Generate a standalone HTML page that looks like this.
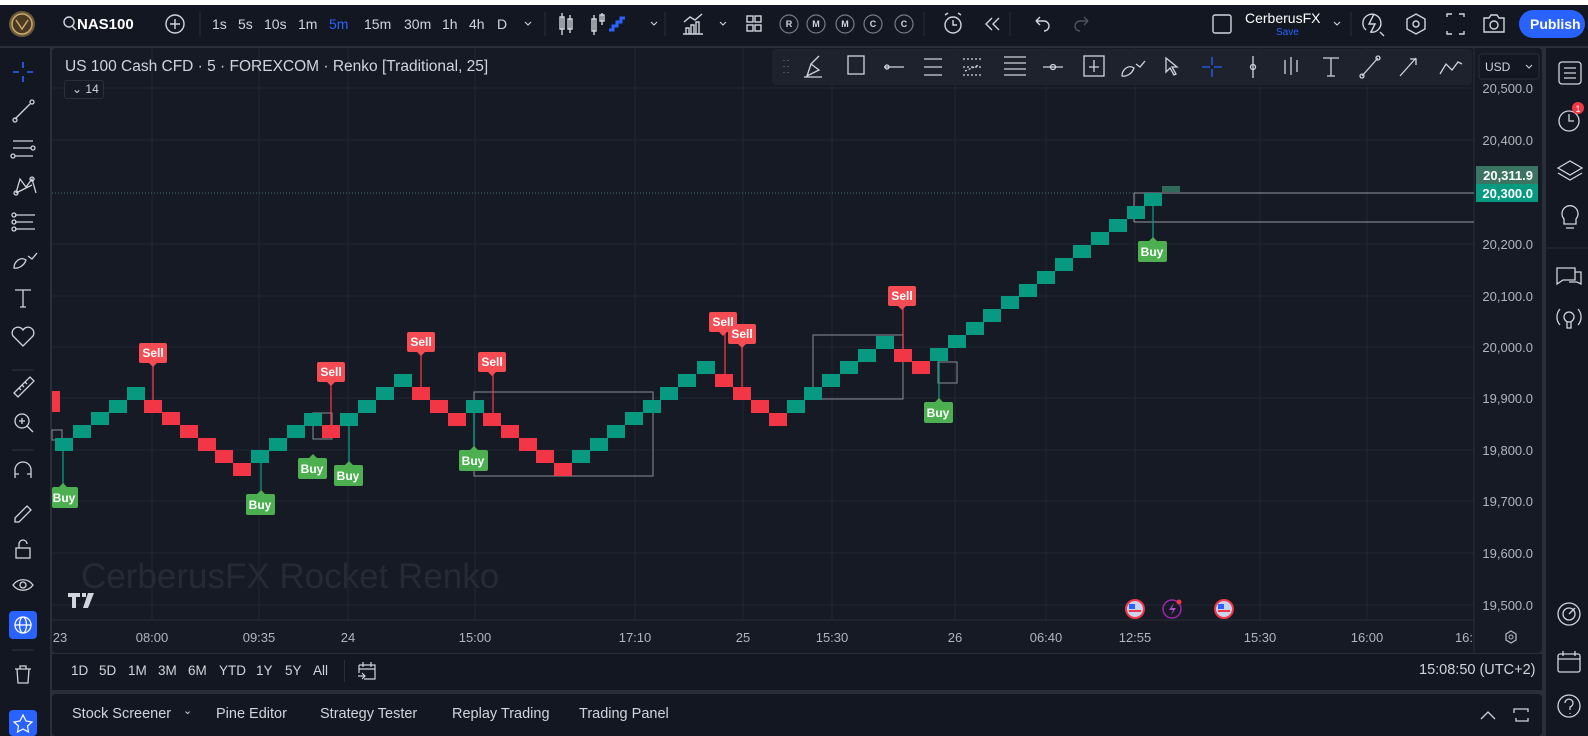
<!DOCTYPE html>
<html><head><meta charset="utf-8">
<style>
*{margin:0;padding:0;box-sizing:border-box}
body{width:1588px;height:736px;background:#2a2e39;position:relative;overflow:hidden;font-family:"Liberation Sans",sans-serif;color:#d1d4dc}
.a{position:absolute}
.t{position:absolute;font-size:14px;color:#d1d4dc;white-space:nowrap}
.tc{transform:translateX(-50%)}
</style></head><body>
<div class="a" style="left:0;top:0;width:1588px;height:5px;background:#fff"></div>
<div class="a" style="left:0;top:5px;width:1588px;height:41px;background:#131722"></div>
<div class="a" style="left:0;top:48px;width:50px;height:688px;background:#131722"></div>
<div class="a" style="left:52px;top:48px;width:1490px;height:605px;background:#161a25;border-radius:4px"></div>
<div class="a" style="left:52px;top:654px;width:1490px;height:36px;background:#131722"></div>
<div class="a" style="left:52px;top:694px;width:1490px;height:42px;background:#131722;border-radius:4px"></div>
<div class="a" style="left:1546px;top:48px;width:42px;height:688px;background:#131722"></div>

<svg class="a" style="left:0;top:0" width="1588" height="736" viewBox="0 0 1588 736">
<g stroke="#232733" stroke-width="1">
<line x1="52" y1="88" x2="1474" y2="88"/><line x1="52" y1="140" x2="1474" y2="140"/><line x1="52" y1="244" x2="1474" y2="244"/><line x1="52" y1="296" x2="1474" y2="296"/><line x1="52" y1="347" x2="1474" y2="347"/><line x1="52" y1="398" x2="1474" y2="398"/><line x1="52" y1="450" x2="1474" y2="450"/><line x1="52" y1="501" x2="1474" y2="501"/><line x1="52" y1="553" x2="1474" y2="553"/><line x1="52" y1="605" x2="1474" y2="605"/>
<line x1="152" y1="48" x2="152" y2="620"/><line x1="259" y1="48" x2="259" y2="620"/><line x1="348" y1="48" x2="348" y2="620"/><line x1="475" y1="48" x2="475" y2="620"/><line x1="635" y1="48" x2="635" y2="620"/><line x1="743" y1="48" x2="743" y2="620"/><line x1="832" y1="48" x2="832" y2="620"/><line x1="955" y1="48" x2="955" y2="620"/><line x1="1046" y1="48" x2="1046" y2="620"/><line x1="1135" y1="48" x2="1135" y2="620"/><line x1="1260" y1="48" x2="1260" y2="620"/><line x1="1367" y1="48" x2="1367" y2="620"/>
</g>
<line x1="52" y1="620" x2="1474" y2="620" stroke="#2a2e39"/>
<line x1="1474" y1="48" x2="1474" y2="653" stroke="#2a2e39"/>
<text x="81" y="588" font-size="35" fill="#262a35" font-family="Liberation Sans">CerberusFX Rocket Renko</text>
<path d="M68 593h12v4h-4v11h-4v-11h-4z M82 593h4v4h-4z M88 593h6l-6 15h-5z" fill="#d1d4dc"/>
<line x1="52" y1="193" x2="1474" y2="193" stroke="#3c6f63" stroke-dasharray="1 2"/>
<line x1="1134" y1="193" x2="1474" y2="193" stroke="#9598a1"/>
<line x1="1134" y1="222" x2="1474" y2="222" stroke="#9598a1"/>
<line x1="1134" y1="193" x2="1134" y2="222" stroke="#9598a1"/>
<g fill="none" stroke="#787b86" stroke-width="1.2">
<rect x="474" y="392" width="179" height="84"/><rect x="813" y="335" width="90" height="64"/><rect x="938" y="362" width="19" height="21"/><rect x="313" y="413" width="19" height="26"/><rect x="52" y="430" width="10" height="10"/>
</g>
<g stroke-width="1.3">
<line x1="153" y1="364" x2="153" y2="400" stroke="#f23645"/><line x1="331" y1="383" x2="331" y2="425" stroke="#f23645"/><line x1="421" y1="353" x2="421" y2="387" stroke="#f23645"/><line x1="493" y1="373" x2="493" y2="413" stroke="#f23645"/><line x1="725" y1="333" x2="725" y2="374" stroke="#f23645"/><line x1="742" y1="345" x2="742" y2="387" stroke="#f23645"/><line x1="903" y1="307" x2="903" y2="349" stroke="#f23645"/>
<line x1="63" y1="451" x2="63" y2="486" stroke="#089981"/><line x1="261" y1="463" x2="261" y2="494" stroke="#089981"/><line x1="349" y1="426" x2="349" y2="465" stroke="#089981"/><line x1="474" y1="413" x2="474" y2="450" stroke="#089981"/><line x1="939" y1="361" x2="939" y2="402" stroke="#089981"/><line x1="1153" y1="206" x2="1153" y2="241" stroke="#089981"/>
</g>
<g fill="#089981">
<rect x="55" y="438" width="18" height="13"/><rect x="73" y="425" width="18" height="13"/><rect x="91" y="412" width="18" height="13"/><rect x="109" y="400" width="18" height="13"/><rect x="127" y="387" width="18" height="13"/>
<rect x="251" y="450" width="18" height="13"/><rect x="269" y="438" width="18" height="13"/><rect x="287" y="425" width="18" height="13"/><rect x="304" y="413" width="18" height="13"/>
<rect x="340" y="413" width="18" height="13"/><rect x="358" y="400" width="18" height="13"/><rect x="376" y="387" width="18" height="13"/><rect x="394" y="374" width="18" height="13"/>
<rect x="466" y="400" width="18" height="13"/>
<rect x="572" y="450" width="18" height="13"/><rect x="590" y="438" width="18" height="13"/><rect x="607" y="425" width="18" height="13"/><rect x="625" y="412" width="18" height="13"/><rect x="643" y="400" width="18" height="13"/><rect x="660" y="387" width="18" height="13"/><rect x="678" y="374" width="18" height="13"/><rect x="697" y="361" width="18" height="13"/>
<rect x="787" y="400" width="18" height="13"/><rect x="804" y="387" width="18" height="13"/><rect x="822" y="374" width="18" height="13"/><rect x="840" y="361" width="18" height="13"/><rect x="858" y="349" width="18" height="13"/><rect x="876" y="336" width="18" height="13"/>
<rect x="930" y="348" width="18" height="13"/><rect x="948" y="335" width="18" height="13"/><rect x="966" y="322" width="18" height="13"/><rect x="983" y="309" width="18" height="13"/><rect x="1001" y="296" width="18" height="13"/><rect x="1019" y="284" width="18" height="13"/><rect x="1037" y="271" width="18" height="13"/><rect x="1055" y="258" width="18" height="13"/><rect x="1073" y="245" width="18" height="13"/><rect x="1091" y="232" width="18" height="13"/><rect x="1109" y="219" width="18" height="13"/><rect x="1127" y="206" width="18" height="13"/><rect x="1144" y="193" width="18" height="13"/>
</g>
<rect x="1162" y="186" width="18" height="6" fill="#2e6b58"/>
<g fill="#f23645">
<rect x="52" y="391" width="8" height="21"/>
<rect x="144" y="400" width="18" height="13"/><rect x="162" y="412" width="18" height="13"/><rect x="180" y="425" width="18" height="13"/><rect x="198" y="438" width="18" height="13"/><rect x="215" y="450" width="18" height="13"/><rect x="233" y="463" width="18" height="13"/>
<rect x="322" y="425" width="18" height="13"/>
<rect x="412" y="387" width="18" height="13"/><rect x="430" y="400" width="18" height="13"/><rect x="448" y="413" width="18" height="13"/>
<rect x="483" y="413" width="18" height="13"/><rect x="501" y="425" width="18" height="13"/><rect x="519" y="438" width="18" height="13"/><rect x="536" y="450" width="18" height="13"/><rect x="554" y="463" width="18" height="13"/>
<rect x="715" y="374" width="18" height="13"/><rect x="733" y="387" width="18" height="13"/><rect x="751" y="400" width="18" height="13"/><rect x="769" y="413" width="18" height="13"/>
<rect x="894" y="349" width="18" height="13"/><rect x="912" y="361" width="18" height="13"/>
</g>
<g font-size="12" font-weight="bold" fill="#fff" text-anchor="middle" font-family="Liberation Sans">
<g fill="#f44c52">
<rect x="139" y="343" width="28" height="20" rx="2"/><path d="M149 363h8l-4 4z"/>
<rect x="317" y="362" width="28" height="20" rx="2"/><path d="M327 382h8l-4 4z"/>
<rect x="407" y="332" width="28" height="20" rx="2"/><path d="M417 352h8l-4 4z"/>
<rect x="478" y="352" width="28" height="20" rx="2"/><path d="M488 372h8l-4 4z"/>
<rect x="709" y="312" width="28" height="20" rx="2"/><path d="M719 332h8l-4 4z"/>
<rect x="728" y="324" width="28" height="20" rx="2"/><path d="M738 344h8l-4 4z"/>
<rect x="888" y="286" width="28" height="20" rx="2"/><path d="M898 306h8l-4 4z"/>
</g>
<text x="153" y="357">Sell</text><text x="331" y="376">Sell</text><text x="421" y="346">Sell</text><text x="492" y="366">Sell</text><text x="723" y="326">Sell</text><text x="742" y="338">Sell</text><text x="902" y="300">Sell</text>
<g fill="#4caf50">
<rect x="52" y="487" width="26" height="21" rx="2"/><path d="M59 487h8l-4 -4z"/>
<rect x="246" y="494" width="29" height="21" rx="2"/><path d="M257 494h8l-4 -4z"/>
<rect x="298" y="458" width="29" height="21" rx="2"/><path d="M309 458h8l-4 -4z"/>
<rect x="334" y="465" width="29" height="21" rx="2"/><path d="M345 465h8l-4 -4z"/>
<rect x="459" y="450" width="29" height="21" rx="2"/><path d="M470 450h8l-4 -4z"/>
<rect x="924" y="402" width="29" height="21" rx="2"/><path d="M935 402h8l-4 -4z"/>
<rect x="1138" y="241" width="29" height="21" rx="2"/><path d="M1149 241h8l-4 -4z"/>
</g>
<text x="64" y="502">Buy</text><text x="260" y="509">Buy</text><text x="312" y="473">Buy</text><text x="348" y="480">Buy</text><text x="473" y="465">Buy</text><text x="938" y="417">Buy</text><text x="1152" y="256">Buy</text>
</g>
<circle cx="1135" cy="609" r="9" fill="#c9d4ee" stroke="#f23645" stroke-width="2"/><rect x="1129" y="604" width="6" height="5" fill="#2962ff"/><rect x="1129" y="610" width="12" height="2" fill="#f23645"/>
<circle cx="1172" cy="609" r="9" fill="none" stroke="#9c27b0" stroke-width="1.5"/><path d="M1174 603l-5 7h4l-2 5 5-7h-4z" fill="#b04ad0"/><circle cx="1179" cy="602" r="2.5" fill="#f23645"/>
<circle cx="1224" cy="609" r="9" fill="#c9d4ee" stroke="#f23645" stroke-width="2"/><rect x="1218" y="604" width="6" height="5" fill="#2962ff"/><rect x="1218" y="610" width="12" height="2" fill="#f23645"/>
<g font-size="13" fill="#b2b5be" text-anchor="end" font-family="Liberation Sans">
<text x="1533" y="93">20,500.0</text><text x="1533" y="145">20,400.0</text><text x="1533" y="249">20,200.0</text><text x="1533" y="301">20,100.0</text><text x="1533" y="352">20,000.0</text><text x="1533" y="403">19,900.0</text><text x="1533" y="455">19,800.0</text><text x="1533" y="506">19,700.0</text><text x="1533" y="558">19,600.0</text><text x="1533" y="610">19,500.0</text>
</g>
<rect x="1476" y="166" width="62" height="18" fill="#3b7562"/><rect x="1476" y="184" width="62" height="18" fill="#089981"/>
<text x="1533" y="180" font-size="13" font-weight="bold" fill="#fff" text-anchor="end">20,311.9</text>
<text x="1533" y="198" font-size="13" font-weight="bold" fill="#fff" text-anchor="end">20,300.0</text>
<g font-size="13" fill="#b2b5be" text-anchor="middle" font-family="Liberation Sans">
<text x="60" y="642">23</text><text x="152" y="642">08:00</text><text x="259" y="642">09:35</text><text x="348" y="642">24</text><text x="475" y="642">15:00</text><text x="635" y="642">17:10</text><text x="743" y="642">25</text><text x="832" y="642">15:30</text><text x="955" y="642">26</text><text x="1046" y="642">06:40</text><text x="1135" y="642">12:55</text><text x="1260" y="642">15:30</text><text x="1367" y="642">16:00</text><text x="1464" y="642">16:</text>
</g>
<path d="M1511 631l5 3v6l-5 3-5-3v-6z" fill="none" stroke="#b2b5be" stroke-width="1.3"/><circle cx="1511" cy="637" r="2" fill="none" stroke="#b2b5be"/>

<rect x="772" y="49" width="700" height="36" rx="4" fill="#1e222d"/>
<g fill="none" stroke="#d1d4dc" stroke-width="1.3">
<path d="M784 60v1M788 60v1M784 66v1M788 66v1M784 72v1M788 72v1" stroke="#50535e" stroke-width="2"/>
<path d="M807 76l4-12 8 6zM811 64l8-8M804 77h18"/>
<rect x="848" y="56" width="16" height="18"/>
<path d="M884 67h20"/><circle cx="887" cy="67" r="2"/>
<path d="M924 59h18M924 67h18M924 75h18"/>
<path d="M963 59h18M963 67h18M963 75h18M965 71l14-6" stroke-dasharray="2 2"/>
<path d="M1004 57h22M1004 63h22M1004 69h22M1004 75h22"/>
<path d="M1043 67h20"/><circle cx="1053" cy="67" r="2.5"/>
<rect x="1084" y="56" width="20" height="20"/><path d="M1094 60v12M1089 67h10"/>
<path d="M1122 76c0-6 6-12 12-8-2 6-8 9-12 8zM1136 64l4 3 5-6"/>
<path d="M1166 58v14l4-4 4 7 2-1-4-7h5z"/>
<path d="M1212 57v8M1212 69v8M1202 67h8M1214 67h8" stroke="#2962ff"/>
<path d="M1253 56v22"/><circle cx="1253" cy="67" r="2.5"/>
<path d="M1285 60v14M1291 57v18M1297 60v12"/>
<path d="M1323 58h16M1331 58v18M1327 76h8"/>
<path d="M1362 76l16-18"/><circle cx="1362" cy="76" r="2"/><circle cx="1378" cy="58" r="2"/>
<path d="M1400 76l16-18M1410 59h6v6"/>
<path d="M1440 74l6-10 6 6 6-8 4 2"/>
</g>
<rect x="1479" y="54" width="60" height="25" rx="3" fill="#131722" stroke="#2a2e39"/>
<text x="1485" y="71" font-size="12" fill="#d1d4dc">USD</text><path d="M1526 65l3 3 3-3" fill="none" stroke="#d1d4dc"/>

<g fill="none" stroke="#d1d4dc" stroke-width="1.3">
<path d="M23 62v6M23 76v6M13 72h6M27 72h6" stroke="#2962ff" stroke-width="1.6"/>
<path d="M15 119l15-15"/><circle cx="15" cy="120" r="2"/><circle cx="32" cy="102" r="2"/>
<path d="M13 141h20M13 148h18M15 156h18"/><circle cx="33" cy="148" r="2"/><circle cx="13" cy="156" r="2"/>
<path d="M16 193l4-14 6 8 6-8 4 14M16 193l16-8"/><circle cx="16" cy="193" r="2"/><circle cx="32" cy="179" r="2"/>
<path d="M15 215h20M15 222h18M15 229h20"/><circle cx="14" cy="215" r="2"/><circle cx="14" cy="222" r="2"/><circle cx="14" cy="229" r="2"/>
<path d="M14 268c0-6 6-12 12-8-2 6-8 9-12 8zM28 256l4 3 5-6"/>
<path d="M15 290h16M23 290v17M20 307h6"/>
<path d="M23 346l-10-10a5 5 0 0 1 10-6 5 5 0 0 1 10 6z"/>
<path d="M12 370h22" stroke="#2a2e39"/>
<path d="M14 393l16-16 4 4-16 16zM19 388l2 2M22 385l2 2M25 382l2 2"/>
<circle cx="22" cy="421" r="7"/><path d="M27 426l6 6M22 418v6M19 421h6"/>
<path d="M12 450h22" stroke="#2a2e39"/>
<path d="M15 478v-8a8 8 0 0 1 16 0v8M15 474h4M27 474h4"/>
<path d="M15 518l12-12 4 4-12 12h-4z"/>
<rect x="16" y="548" width="14" height="10"/><path d="M19 548v-4a4 4 0 0 1 8 0"/>
<path d="M13 585c5-7 15-7 20 0-5 7-15 7-20 0z"/><circle cx="23" cy="585" r="3"/>
<path d="M12 650h22" stroke="#2a2e39"/>
<path d="M15 669h16M17 669l1 14h10l1-14M20 669v-3h6v3"/>
</g>
<rect x="9" y="611" width="28" height="28" rx="4" fill="#2962ff"/>
<g fill="none" stroke="#fff" stroke-width="1.3"><circle cx="23" cy="625" r="8"/><ellipse cx="23" cy="625" rx="3.5" ry="8"/><path d="M15 625h16"/></g>
<rect x="9" y="710" width="28" height="26" rx="4" fill="#2962ff"/>
<path d="M23 715l3 6 6 1-4.5 4 1 6-5.5-3-5.5 3 1-6-4.5-4 6-1z" fill="none" stroke="#fff" stroke-width="1.2"/>

<g fill="none" stroke="#d1d4dc" stroke-width="1.3">
<rect x="1559" y="62" width="22" height="22" rx="3"/><path d="M1564 68h12M1564 73h12M1564 78h12"/>
<circle cx="1569" cy="121" r="10"/><path d="M1569 114v7h5"/>
<path d="M1558 168l12-7 12 7-12 7zM1558 173l12 7 12-7"/>
<path d="M1564 219a8 8 0 1 1 12 0v5h-12zM1566 228h8"/>
<path d="M1557 268h18v12h-12l-6 4z"/><path d="M1575 272h6v12l-4-2h-8"/>
<circle cx="1569" cy="317" r="5"/><path d="M1567 322v6h4v-6M1560 309a12 12 0 0 0 0 16M1578 309a12 12 0 0 1 0 16"/>
<circle cx="1569" cy="614" r="11"/><circle cx="1569" cy="614" r="6"/><path d="M1569 614l6-6"/>
<rect x="1558" y="654" width="22" height="18" rx="2"/><path d="M1558 659h22M1563 651v5M1575 651v5"/>
<circle cx="1569" cy="706" r="11"/><path d="M1565 703a4 4 0 1 1 5 4v3M1570 713v1"/>
</g>
<circle cx="1578" cy="108" r="6" fill="#f23645"/><text x="1578" y="112" font-size="9" fill="#fff" text-anchor="middle">1</text>
<path d="M1546 248h42" stroke="#2a2e39"/>

<circle cx="22" cy="24" r="13" fill="#6b5a3a"/><circle cx="22" cy="24" r="10" fill="#4a3a24" stroke="#c9a86a" stroke-width="1.5"/><path d="M16 20l6 9 6-9" fill="none" stroke="#c9a86a" stroke-width="1.5"/>
<g fill="none" stroke="#d1d4dc" stroke-width="1.4">
<circle cx="69" cy="22" r="5"/><path d="M72 26l4 4"/>
<circle cx="175" cy="24" r="9"/><path d="M175 19v10M170 24h10"/>
<path d="M525 22l3 3 3-3M651 22l3 3 3-3M720 22l3 3 3-3M1334 22l3 3 3-3" stroke-width="1.1"/>
<path d="M562 13v22M560 17h4v12h-4zM570 15v18M568 19h4v10h-4z"/>
<path d="M594 15v20M592 19h4v12h-4zM602 13v12M600 15h4v6h-4z"/>
<path d="M683 34h20M686 34v-6h3v6M691 34v-9h3v9M696 34v-12h3v12M684 22l6-5 5 3 7-6"/>
<rect x="747" y="16" width="6" height="6"/><rect x="755" y="16" width="6" height="6"/><rect x="747" y="25" width="6" height="6"/><rect x="755" y="25" width="6" height="6"/>
<circle cx="953" cy="25" r="8"/><path d="M953 20v5h4M945 15l3-2M961 15l-3-2"/>
<path d="M992 18l-6 6 6 6M999 18l-6 6 6 6"/>
<path d="M1036 21h8a5 5 0 0 1 0 10M1036 21l4-4M1036 21l4 4"/>
<path d="M1088 21h-8a5 5 0 0 0 0 10M1088 21l-4-4M1088 21l-4 4" stroke="#50535e"/>
<rect x="1213" y="15" width="18" height="18" rx="2"/>
<path d="M1374 14l-5 10h6l-4 8M1366 30a9 9 0 1 1 4 2M1380 32l4 4"/>
<path d="M1416 14l9 5v10l-9 5-9-5v-10z"/><circle cx="1416" cy="24" r="3"/>
<path d="M1447 17v-3h5M1459 14h5v3M1464 31v3h-5M1452 34h-5v-3"/>
<path d="M1484 18h5l2-3h6l2 3h5v14h-20z"/><circle cx="1494" cy="25" r="4"/>
</g>
<path d="M609 30h4v-4h4v-4h4v-4h4" fill="none" stroke="#2962ff" stroke-width="3"/>
<g fill="none" stroke="#787b86" stroke-width="1.2">
<circle cx="789" cy="24" r="9"/><circle cx="816" cy="24" r="9"/><circle cx="845" cy="24" r="9"/><circle cx="873" cy="24" r="9"/><circle cx="904" cy="24" r="9"/>
</g>
<g font-size="9" fill="#d1d4dc" text-anchor="middle" font-weight="bold"><text x="789" y="27">R</text><text x="816" y="27">M</text><text x="845" y="27">M</text><text x="873" y="27">C</text><text x="904" y="27">C</text></g>
<g stroke="#2a2e39" stroke-width="1"><path d="M200 12v24M545 12v24M665 12v24M924 12v24M1010 12v24M1351 12v24"/></g>
<rect x="1519" y="10" width="66" height="28" rx="14" fill="#2962ff"/>
</svg>

<div class="t" style="left:77px;top:16px;font-size:15px;font-weight:bold;color:#fff">NAS100</div>
<div class="t" style="left:212px;top:16px;font-size:14px;letter-spacing:0">
<span style="position:absolute;left:0">1s</span><span style="position:absolute;left:26px">5s</span><span style="position:absolute;left:52px">10s</span><span style="position:absolute;left:86px">1m</span><span style="position:absolute;left:117px;color:#2962ff">5m</span><span style="position:absolute;left:152px">15m</span><span style="position:absolute;left:192px">30m</span><span style="position:absolute;left:230px">1h</span><span style="position:absolute;left:257px">4h</span><span style="position:absolute;left:285px">D</span></div>
<div class="t" style="left:1245px;top:10px;font-size:14px;color:#fff">CerberusFX</div>
<div class="t" style="left:1276px;top:27px;font-size:10px;color:#2962ff">Save</div>
<div class="t" style="left:1530px;top:16px;font-size:14px;font-weight:bold;color:#fff">Publish</div>

<div class="t" style="left:65px;top:58px;font-size:15.5px;color:#d1d4dc">US 100 Cash CFD · 5 · FOREXCOM · Renko [Traditional, 25]</div>
<div class="a" style="left:64px;top:80px;width:40px;height:19px;border:1px solid #2a2e39;border-radius:3px;background:#161a25"></div>
<div class="t" style="left:72px;top:82px;font-size:12px">⌄ 14</div>

<div class="t" style="left:71px;top:663px;font-size:13.5px">1D</div>
<div class="t" style="left:99px;top:663px;font-size:13.5px">5D</div>
<div class="t" style="left:128px;top:663px;font-size:13.5px">1M</div>
<div class="t" style="left:158px;top:663px;font-size:13.5px">3M</div>
<div class="t" style="left:188px;top:663px;font-size:13.5px">6M</div>
<div class="t" style="left:219px;top:663px;font-size:13.5px">YTD</div>
<div class="t" style="left:256px;top:663px;font-size:13.5px">1Y</div>
<div class="t" style="left:285px;top:663px;font-size:13.5px">5Y</div>
<div class="t" style="left:313px;top:663px;font-size:13.5px">All</div>
<div class="a" style="left:344px;top:660px;width:1px;height:22px;background:#2a2e39"></div>
<svg class="a" style="left:356px;top:660px" width="22" height="22"><g fill="none" stroke="#d1d4dc" stroke-width="1.2"><path d="M3 5h16v14H8M3 5v8M3 9h16M7 2v5M15 2v5M2 16h7M6 13l3 3-3 3"/></g></svg>
<div class="t" style="left:1419px;top:662px;font-size:14.5px;color:#d1d4dc">15:08:50 (UTC+2)</div>

<div class="t" style="left:72px;top:706px;font-size:14.5px">Stock Screener</div>
<div class="t" style="left:183px;top:704px;font-size:11px">⌄</div>
<div class="t" style="left:216px;top:706px;font-size:14.5px">Pine Editor</div>
<div class="t" style="left:320px;top:706px;font-size:14.5px">Strategy Tester</div>
<div class="t" style="left:452px;top:706px;font-size:14.5px">Replay Trading</div>
<div class="t" style="left:579px;top:706px;font-size:14.5px">Trading Panel</div>
<svg class="a" style="left:1476px;top:700px" width="60" height="30"><g fill="none" stroke="#d1d4dc" stroke-width="1.3"><path d="M5 19l7-7 7 7"/><path d="M40 9h-2v4M40 9h12v3M52 18v3H40v-3"/></g></svg>
</body></html>
